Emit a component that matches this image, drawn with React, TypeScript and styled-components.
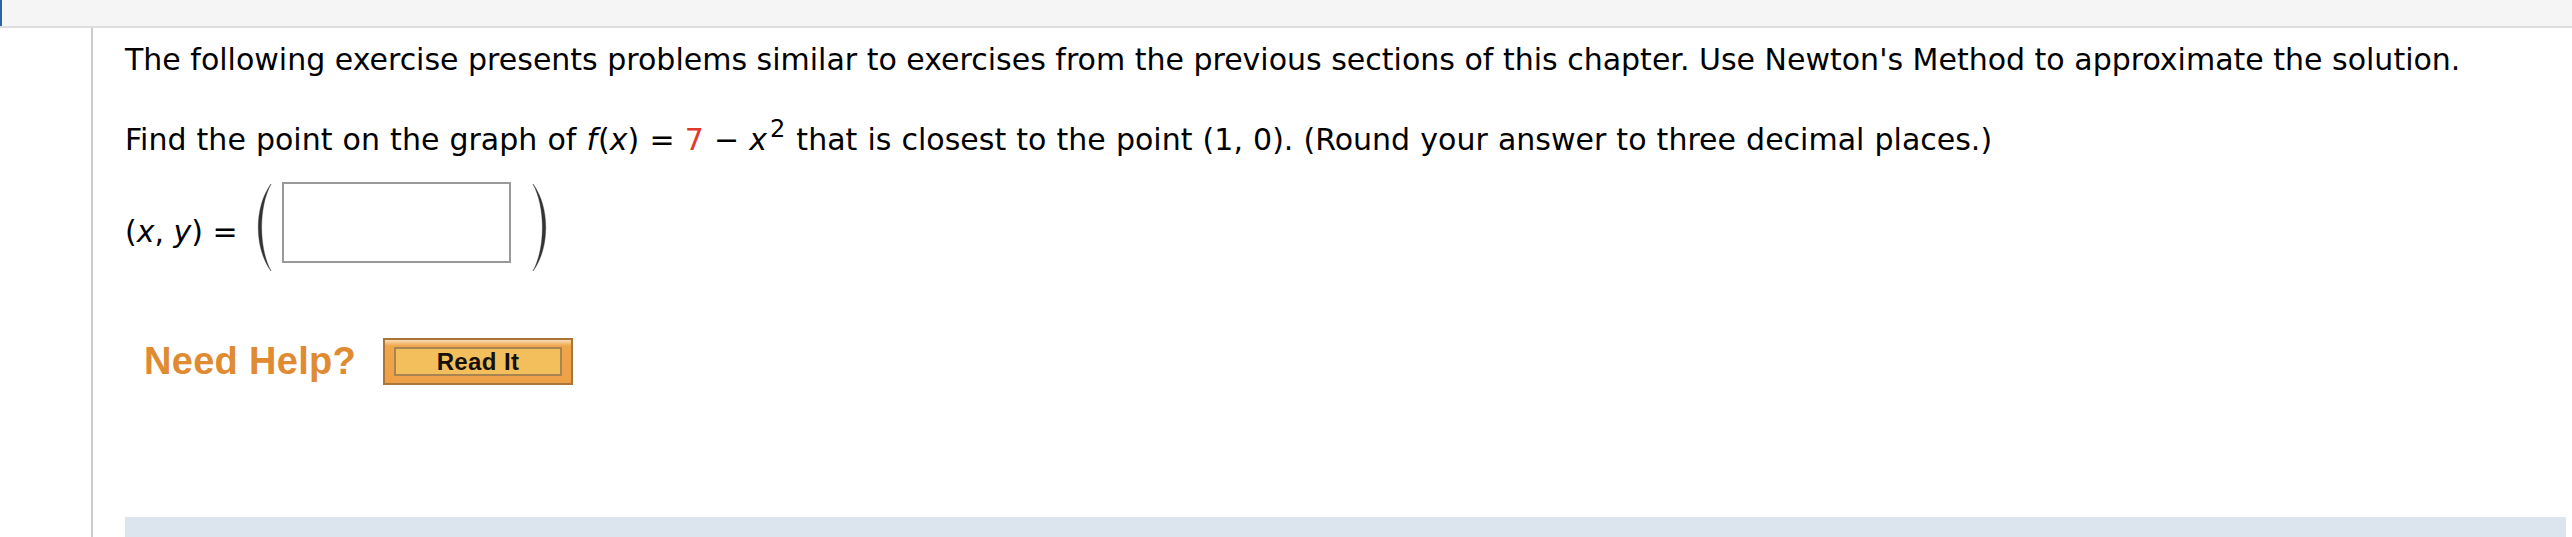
import React from "react";
import styled, { createGlobalStyle } from "styled-components";

const Global = createGlobalStyle`
  html, body { margin: 0; padding: 0; background: #ffffff; }
  body { font-family: "DejaVu Sans", Verdana, sans-serif; }
`;

const Page = styled.div`
  width: 2572px;
  height: 537px;
  overflow: hidden;
  display: flex;
  flex-direction: column;
`;

const TopBar = styled.div`
  height: 26px;
  flex: none;
  background: #f5f5f5;
  border-bottom: 2px solid #dddddd;
  display: flex;
`;

const BlueMark = styled.div`
  width: 2px;
  height: 26px;
  background: #2c64a6;
`;

const Body = styled.div`
  flex: 1;
  display: flex;
  min-height: 0;
`;

const Gutter = styled.div`
  width: 91px;
  flex: none;
  border-right: 2px solid #cccccc;
`;

const Content = styled.div`
  flex: 1;
  display: flex;
  flex-direction: column;
  padding: 14px 6px 0 32px;
  min-width: 0;
`;

const Para = styled.p<{ $gap?: number; $wordSpacing?: number }>`
  margin: 0 0 ${(p) => p.$gap ?? 0}px 0;
  font-family: "DejaVu Sans", Verdana, sans-serif;
  font-size: 30px;
  line-height: 36px;
  color: #000;
  white-space: nowrap;
  word-spacing: ${(p) => p.$wordSpacing ?? 0}px;
`;

const MathVar = styled.i<{ $after?: number }>`
  margin-right: ${(p) => p.$after ?? 0}px;
`;

const Red = styled.span`
  color: #e5372b;
`;

const Sup = styled.sup`
  font-size: 24px;
  line-height: 0;
  vertical-align: 13px;
  margin-left: 3px;
  margin-right: 1px;
`;

const AnswerRow = styled.div`
  display: flex;
  align-items: flex-start;
`;

const Label = styled.span`
  font-family: "DejaVu Sans", Verdana, sans-serif;
  font-size: 30px;
  line-height: 36px;
  color: #000;
  margin-top: 36px;
  margin-right: 14px;
  white-space: nowrap;
`;

const Paren = styled.svg<{ $flip?: boolean }>`
  width: 20px;
  height: 89px;
  flex: none;
  margin-top: 5px;
  transform: ${(p) => (p.$flip ? "scaleX(-1)" : "none")};
`;

const AnswerBox = styled.input`
  box-sizing: border-box;
  width: 229px;
  height: 81px;
  border: 2px solid #999999;
  background: #fff;
  margin: 4px 21px 0 10px;
  padding: 0;
  outline: none;
`;

const HelpRow = styled.div`
  display: flex;
  align-items: center;
  margin-top: 66px;
  padding-left: 19px;
  gap: 27px;
`;

const HelpLabel = styled.span`
  font-family: "Liberation Sans", Arial, sans-serif;
  font-weight: bold;
  font-size: 38px;
  color: #e08a32;
  letter-spacing: 0.3px;
`;

const ReadButton = styled.button`
  box-sizing: border-box;
  width: 190px;
  height: 47px;
  padding: 7px 9px 7px 9px;
  border: 2px solid #a9753a;
  background: linear-gradient(#f8dcb4 0px, #f0a64a 6px, #eea046 100%);
  display: flex;
  cursor: pointer;
`;

const ReadInner = styled.span`
  flex: 1;
  display: flex;
  align-items: center;
  justify-content: center;
  border: 2px solid #a88450;
  background: #f3bf5c;
  font-family: "Liberation Sans", Arial, sans-serif;
  font-weight: bold;
  font-size: 24px;
  color: #151008;
  letter-spacing: 0.4px;
`;

const Spacer = styled.div`
  flex: 1;
`;

const BottomBar = styled.div`
  height: 20px;
  flex: none;
  background: #dce5ee;
`;

const ParenShape = ({ flip }: { flip?: boolean }) => (
  <Paren $flip={flip} viewBox="0 0 20 89">
    <path
      d="M19 1 C 2 24, 2 65, 19 88 C 6.5 65, 6.5 24, 19 1 Z"
      fill="#333333"
      stroke="#333333"
      strokeWidth="0.4"
    />
  </Paren>
);

export default function App() {
  return (
    <Page>
      <Global />
      <TopBar>
        <BlueMark />
      </TopBar>
      <Body>
        <Gutter />
        <Content>
          <Para $gap={44}>
            The following exercise presents problems similar to exercises from the previous sections of this chapter.
            Use Newton's Method to approximate the solution.
          </Para>
          <Para $gap={20} $wordSpacing={0.6}>
            Find the point on the graph of <MathVar $after={1}>f</MathVar>(<i>x</i>) = <Red>7</Red> − <i>x</i>
            <Sup>2</Sup> that is closest to the point (1, 0). (Round your answer to three decimal places.)
          </Para>
          <AnswerRow>
            <Label>
              (<i>x</i>, <i>y</i>) =
            </Label>
            <ParenShape />
            <AnswerBox aria-label="answer" />
            <ParenShape flip />
          </AnswerRow>
          <HelpRow>
            <HelpLabel>Need Help?</HelpLabel>
            <ReadButton>
              <ReadInner>Read It</ReadInner>
            </ReadButton>
          </HelpRow>
          <Spacer />
          <BottomBar />
        </Content>
      </Body>
    </Page>
  );
}
